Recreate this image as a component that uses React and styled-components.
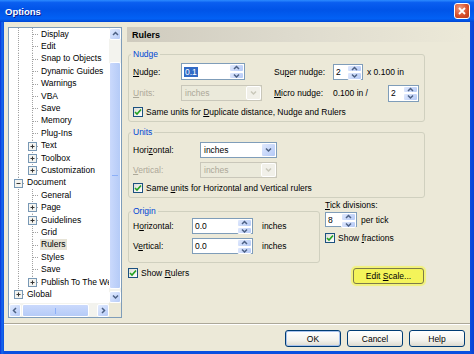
import React from "react"
import styled, { createGlobalStyle } from "styled-components"

const GlobalStyle = createGlobalStyle`
  html, body { margin: 0; padding: 0; overflow: hidden; background: #0B4FE2; }
  body { font-family: "Liberation Sans", Arial, sans-serif; font-size: 8.5px; color: #000; }
  * { box-sizing: border-box; }
`

const Window = styled.div`
  width: 474px;
  height: 354px;
  display: flex;
  flex-direction: column;
  background: linear-gradient(to right, #0831D9, #166AEE 2px, #0A4FE0 4px, #0A4FE0 470px, #0842D4);
`

const TitleBar = styled.div`
  height: 22px;
  flex: none;
  display: flex;
  align-items: center;
  justify-content: space-between;
  padding: 0 4px 0 5px;
  background: linear-gradient(#2C8BFF 0%, #0A5EF0 12%, #0054E8 45%, #0261F5 85%, #0046D4 100%);
`

const Title = styled.span`
  color: #fff;
  font-weight: bold;
  font-size: 9.5px;
  text-shadow: 1px 1px #0A1E8C;
`

const CloseBtn = styled.div`
  width: 16px;
  height: 16px;
  border: 1px solid #fff;
  border-radius: 3px;
  background: radial-gradient(circle at 35% 30%, #F09A80, #D8512D 55%, #B8381A);
  display: flex;
  align-items: center;
  justify-content: center;
`

const Body = styled.div`
  flex: 1;
  margin: 0 4px 3px;
  background: #ECE9D8;
  display: flex;
  flex-direction: column;
`

const Main = styled.div`
  display: flex;
  padding: 5px 0 0 4px;
  height: 296px;
`

const TreeBox = styled.div`
  width: 114px;
  height: 291px;
  border: 1px solid #7F9DB9;
  background: #fff;
  display: grid;
  grid-template-columns: 1fr 12px;
  grid-template-rows: 1fr 14px;
`

const TreeContent = styled.div`
  overflow: hidden;
  padding-left: 2px;
`

const TreeRow = styled.div`
  display: flex;
  align-items: center;
  height: 12.4px;
  white-space: nowrap;
`

const TreeLabel = styled.span`
  margin-left: 1px;
  padding: 0 1px;
  line-height: 11px;
  background: ${p => (p.$selected ? "#E6E3D6" : "transparent")};
`

const VScroll = styled.div`
  display: flex;
  flex-direction: column;
  background: #F3F3EE;
`

const HScroll = styled.div`
  display: flex;
  background: #F3F3EE;
  padding-top: 1px;
`

const Corner = styled.div`
  background: #ECE9D8;
`

const ArrowBtn = styled.div`
  width: ${p => p.$w || 12}px;
  height: ${p => p.$h || 12}px;
  flex: none;
  border: 1px solid #fff;
  border-radius: 2px;
  background: linear-gradient(135deg, #E2EBFE, #B6CBF8);
  display: flex;
  align-items: center;
  justify-content: center;
`

const Track = styled.div`
  flex: 1;
  display: flex;
  flex-direction: ${p => (p.$horizontal ? "row" : "column")};
  padding: ${p => (p.$horizontal ? "0 8px 0 1px" : "22px 0 2px")};
`

const Thumb = styled.div`
  flex: 1;
  border: 1px solid #fff;
  border-radius: 2px;
  background: linear-gradient(${p => (p.$horizontal ? "180deg" : "90deg")}, #CAD9FC, #B5CBF7);
  display: flex;
  align-items: center;
  justify-content: center;
`

const Grip = styled.div`
  width: ${p => (p.$horizontal ? "1px" : "6px")};
  height: ${p => (p.$horizontal ? "6px" : "1px")};
  background: #8CB0F8;
`

const Pane = styled.div`
  width: 339px;
  margin-left: 5px;
  display: flex;
  flex-direction: column;
`

const PaneHeader = styled.div`
  height: 15px;
  padding-left: 5px;
  display: flex;
  align-items: center;
  font-weight: bold;
  font-size: 9px;
  background: linear-gradient(to right, #CFCBBE, #DEDBCE 50%, #ECE9D8);
`

const Group = styled.fieldset`
  width: ${p => p.$w}px;
  margin: ${p => p.$mt}px 0 0 1px;
  padding: 0 0 ${p => p.$pb}px 4px;
  min-width: 0;
  border: 1px solid #D0D0BF;
  border-radius: 3px;
`

const Legend = styled.legend`
  padding: 0 2px;
  margin-left: -2px;
  line-height: 10px;
  color: #0046D5;
`

const FieldGrid = styled.div`
  display: grid;
  grid-template-columns: ${p => p.$cols};
  grid-template-rows: ${p => p.$rows};
  row-gap: ${p => p.$gap}px;
  margin-top: ${p => p.$mt}px;
`

const Cell = styled.div`
  display: flex;
  align-items: center;
  grid-column: ${p => p.$span || "auto"};
  color: ${p => (p.$disabled ? "#ACA899" : "#000")};
  white-space: nowrap;
`

const Text = styled.span`
  margin-left: ${p => p.$ml || 0}px;
  width: ${p => (p.$w ? `${p.$w}px` : "auto")};
  flex: none;
`

const SpinWrap = styled.div`
  width: ${p => p.$w}px;
  height: ${p => p.$h || 16}px;
  flex: none;
  border: 1px solid #7F9DB9;
  background: #fff;
  display: flex;
`

const SpinValue = styled.div`
  flex: 1;
  display: flex;
  align-items: center;
  padding-left: 2px;
`

const Selected = styled.span`
  background: #316AC5;
  color: #fff;
  padding: 0 1px;
`

const SpinButtons = styled.div`
  width: 15px;
  display: flex;
  flex-direction: column;
`

const SpinBtn = styled.div`
  flex: 1;
  border: 1px solid #fff;
  border-radius: 2px;
  background: linear-gradient(135deg, #E0E9FD, #B4C9F6);
  display: flex;
  align-items: center;
  justify-content: center;
`

const Combo = styled.div`
  width: ${p => p.$w}px;
  height: 16px;
  flex: none;
  border: 1px solid ${p => (p.$disabled ? "#C9C7BA" : "#7F9DB9")};
  background: ${p => (p.$disabled ? "#EBEADB" : "#fff")};
  color: ${p => (p.$disabled ? "#ACA899" : "#000")};
  display: flex;
`

const ComboValue = styled.div`
  flex: 1;
  display: flex;
  align-items: center;
  padding-left: 3px;
`

const ComboBtn = styled.div`
  width: 15px;
  border: 1px solid #fff;
  border-radius: 2px;
  background: ${p =>
    p.$disabled ? "#F1F0E9" : "linear-gradient(135deg, #E0E9FD, #B4C9F6)"};
  display: flex;
  align-items: center;
  justify-content: center;
`

const CheckRow = styled.div`
  display: flex;
  align-items: center;
  gap: 3px;
  white-space: nowrap;
  margin-top: ${p => p.$mt || 0}px;
`

const Box = styled.div`
  width: 10px;
  height: 10px;
  flex: none;
  border: 1px solid #1C5180;
  background: linear-gradient(135deg, #DCDCD7, #fff);
  display: flex;
  align-items: center;
  justify-content: center;
`

const OriginRow = styled.div`
  display: flex;
  align-items: flex-start;
`

const TickColumn = styled.div`
  margin: 2px 0 0 5px;
  display: flex;
  flex-direction: column;
`

const TickLine = styled.div`
  display: flex;
  align-items: center;
  margin-top: ${p => p.$mt || 0}px;
  gap: 4px;
`

const BottomRow = styled.div`
  width: 298px;
  display: flex;
  justify-content: space-between;
  align-items: flex-start;
  margin: 4px 0 0 1px;
`

const ScaleBtn = styled.div`
  width: 71px;
  height: 16px;
  margin: 1px 2px 0 0;
  border: 1px solid #7D7B4A;
  border-radius: 3px;
  background: #F4F45A;
  box-shadow: 0 0 1px 2px #F2F27A;
  display: flex;
  align-items: center;
  justify-content: center;
`

const Separator = styled.div`
  margin-top: 5px;
  height: 2px;
  border-top: 1px solid #ACA899;
  border-bottom: 1px solid #fff;
`

const ButtonBar = styled.div`
  display: flex;
  justify-content: flex-end;
  gap: 6px;
  padding-right: 5px;
  margin-top: 5px;
`

const DialogBtn = styled.div`
  width: 56px;
  height: 17px;
  border: 1px solid #003C74;
  border-radius: 3px;
  background: linear-gradient(#FFFFFF, #F4F3EE 60%, #DCDAD0);
  box-shadow: ${p => (p.$default ? "inset 0 0 0 1px #A9C3EE" : "none")};
  display: flex;
  align-items: center;
  justify-content: center;
`

const treeRows = [
  { label: "Display", cells: ["pipe", "tee"] },
  { label: "Edit", cells: ["pipe", "tee"] },
  { label: "Snap to Objects", cells: ["pipe", "tee"] },
  { label: "Dynamic Guides", cells: ["pipe", "tee"] },
  { label: "Warnings", cells: ["pipe", "tee"] },
  { label: "VBA", cells: ["pipe", "tee"] },
  { label: "Save", cells: ["pipe", "tee"] },
  { label: "Memory", cells: ["pipe", "tee"] },
  { label: "Plug-Ins", cells: ["pipe", "tee"] },
  { label: "Text", cells: ["pipe", "tee"], box: "plus" },
  { label: "Toolbox", cells: ["pipe", "tee"], box: "plus" },
  { label: "Customization", cells: ["pipe", "last"], box: "plus" },
  { label: "Document", cells: ["tee"], box: "minus" },
  { label: "General", cells: ["pipe", "tee"] },
  { label: "Page", cells: ["pipe", "tee"], box: "plus" },
  { label: "Guidelines", cells: ["pipe", "tee"], box: "plus" },
  { label: "Grid", cells: ["pipe", "tee"] },
  { label: "Rulers", cells: ["pipe", "tee"], selected: true },
  { label: "Styles", cells: ["pipe", "tee"] },
  { label: "Save", cells: ["pipe", "tee"] },
  { label: "Publish To The Web", cells: ["pipe", "last"], box: "plus" },
  { label: "Global", cells: ["last"], box: "plus" },
]

const GuideCell = ({ kind, box }) => (
  <svg width="14" height="12.4" viewBox="0 0 14 12.4" style={{ flex: "none" }}>
    <g stroke="#A0A0A0" strokeWidth="1" strokeDasharray="1 1">
      {kind !== "last" && <line x1="7.5" y1="0" x2="7.5" y2="12.4" />}
      {kind === "last" && <line x1="7.5" y1="0" x2="7.5" y2="6.5" />}
      {kind !== "pipe" && <line x1="8" y1="6.5" x2="14" y2="6.5" />}
    </g>
    {box && (
      <g>
        <rect x="3.5" y="2.5" width="8" height="8" fill="#F4F4F0" stroke="#7898B5" />
        <line x1="5.5" y1="6.5" x2="9.5" y2="6.5" stroke="#333" />
        {box === "plus" && <line x1="7.5" y1="4.5" x2="7.5" y2="8.5" stroke="#333" />}
      </g>
    )}
  </svg>
)

const Chevron = ({ dir, color = "#4D6185" }) => {
  const paths = {
    up: "1,4 3.5,1.5 6,4",
    down: "1,1.5 3.5,4 6,1.5",
    left: "4,1 1.5,3.5 4,6",
    right: "2,1 4.5,3.5 2,6",
  }
  const wide = dir === "left" || dir === "right"
  return (
    <svg width={wide ? 6 : 7} height={wide ? 7 : 5.5} viewBox={wide ? "0 0 6 7" : "0 0 7 5.5"}>
      <polyline points={paths[dir]} fill="none" stroke={color} strokeWidth="1.5" />
    </svg>
  )
}

const Check = () => (
  <svg width="8" height="8" viewBox="0 0 8 8">
    <polyline points="1,4 3,6 7,1.5" fill="none" stroke="#21A121" strokeWidth="1.6" />
  </svg>
)

const Spin = ({ w, h, children }) => (
  <SpinWrap $w={w} $h={h}>
    <SpinValue>{children}</SpinValue>
    <SpinButtons>
      <SpinBtn><Chevron dir="up" /></SpinBtn>
      <SpinBtn><Chevron dir="down" /></SpinBtn>
    </SpinButtons>
  </SpinWrap>
)

const Select = ({ w, disabled, children }) => (
  <Combo $w={w} $disabled={disabled}>
    <ComboValue>{children}</ComboValue>
    <ComboBtn $disabled={disabled}>
      <Chevron dir="down" color={disabled ? "#C9C7BA" : "#4D6185"} />
    </ComboBtn>
  </Combo>
)

const Checkbox = ({ mt, children }) => (
  <CheckRow $mt={mt}>
    <Box><Check /></Box>
    <span>{children}</span>
  </CheckRow>
)

const Tree = () => (
  <TreeBox>
    <TreeContent>
      {treeRows.map((row, i) => (
        <TreeRow key={i}>
          {row.cells.map((kind, j) => (
            <GuideCell
              key={j}
              kind={kind}
              box={j === row.cells.length - 1 ? row.box : undefined}
            />
          ))}
          <TreeLabel $selected={row.selected}>{row.label}</TreeLabel>
        </TreeRow>
      ))}
    </TreeContent>
    <VScroll>
      <ArrowBtn><Chevron dir="up" /></ArrowBtn>
      <Track>
        <Thumb><Grip /></Thumb>
      </Track>
      <ArrowBtn><Chevron dir="down" /></ArrowBtn>
    </VScroll>
    <HScroll>
      <ArrowBtn $w={12} $h={13}><Chevron dir="left" /></ArrowBtn>
      <Track $horizontal>
        <Thumb $horizontal><Grip $horizontal /></Thumb>
      </Track>
      <ArrowBtn $w={12} $h={13}><Chevron dir="right" /></ArrowBtn>
    </HScroll>
    <Corner />
  </TreeBox>
)

const App = () => (
  <>
    <GlobalStyle />
    <Window>
      <TitleBar>
        <Title>Options</Title>
        <CloseBtn>
          <svg width="8" height="8" viewBox="0 0 8 8">
            <path d="M1 1 L7 7 M7 1 L1 7" stroke="#fff" strokeWidth="1.8" />
          </svg>
        </CloseBtn>
      </TitleBar>
      <Body>
        <Main>
          <Tree />
          <Pane>
            <PaneHeader>Rulers</PaneHeader>

            <Group $w={297} $mt={7} $pb={4}>
              <Legend>Nudge</Legend>
              <FieldGrid $cols="48px 93px 59px 1fr" $rows="17px 16px 11px" $gap={5} $mt={4}>
                <Cell><span><u>N</u>udge:</span></Cell>
                <Cell><Spin w={64} h={17}><Selected>0.1</Selected></Spin></Cell>
                <Cell><span>Su<u>p</u>er nudge:</span></Cell>
                <Cell>
                  <Spin w={30}>2</Spin>
                  <Text $ml={4}>x 0.100 in</Text>
                </Cell>
                <Cell $disabled><span><u>U</u>nits:</span></Cell>
                <Cell><Select w={81} disabled>inches</Select></Cell>
                <Cell><span><u>M</u>icro nudge:</span></Cell>
                <Cell>
                  <Text $w={55}>0.100 in /</Text>
                  <Spin w={31} h={17}>2</Spin>
                </Cell>
                <Cell $span="1 / -1">
                  <Checkbox>Same units for <u>D</u>uplicate distance, Nudge and Rulers</Checkbox>
                </Cell>
              </FieldGrid>
            </Group>

            <Group $w={297} $mt={5} $pb={4}>
              <Legend>Units</Legend>
              <FieldGrid $cols="67px 1fr" $rows="16px 16px 11px" $gap={4} $mt={5}>
                <Cell><span>Hori<u>z</u>ontal:</span></Cell>
                <Cell><Select w={77}>inches</Select></Cell>
                <Cell $disabled><span><u>V</u>ertical:</span></Cell>
                <Cell><Select w={77} disabled>inches</Select></Cell>
                <Cell $span="1 / -1">
                  <Checkbox>Same <u>u</u>nits for Horizontal and Vertical rulers</Checkbox>
                </Cell>
              </FieldGrid>
            </Group>

            <OriginRow>
              <Group $w={192} $mt={8} $pb={8}>
                <Legend>Origin</Legend>
                <FieldGrid $cols="59px 61px 1fr" $rows="16px 16px" $gap={4} $mt={2}>
                  <Cell><span>H<u>o</u>rizontal:</span></Cell>
                  <Cell><Spin w={61}>0.0</Spin></Cell>
                  <Cell><Text $ml={9}>inches</Text></Cell>
                  <Cell><span>V<u>e</u>rtical:</span></Cell>
                  <Cell><Spin w={61}>0.0</Spin></Cell>
                  <Cell><Text $ml={9}>inches</Text></Cell>
                </FieldGrid>
              </Group>
              <TickColumn>
                <TickLine><span><u>T</u>ick divisions:</span></TickLine>
                <TickLine $mt={2}>
                  <Spin w={32} h={15}>8</Spin>
                  <span>per tick</span>
                </TickLine>
                <Checkbox mt={6}>Show <u>f</u>ractions</Checkbox>
              </TickColumn>
            </OriginRow>

            <BottomRow>
              <Checkbox mt={1}>Show <u>R</u>ulers</Checkbox>
              <ScaleBtn><span>Edit <u>S</u>cale...</span></ScaleBtn>
            </BottomRow>
          </Pane>
        </Main>
        <Separator />
        <ButtonBar>
          <DialogBtn $default>OK</DialogBtn>
          <DialogBtn>Cancel</DialogBtn>
          <DialogBtn>Help</DialogBtn>
        </ButtonBar>
      </Body>
    </Window>
  </>
)

export default App
